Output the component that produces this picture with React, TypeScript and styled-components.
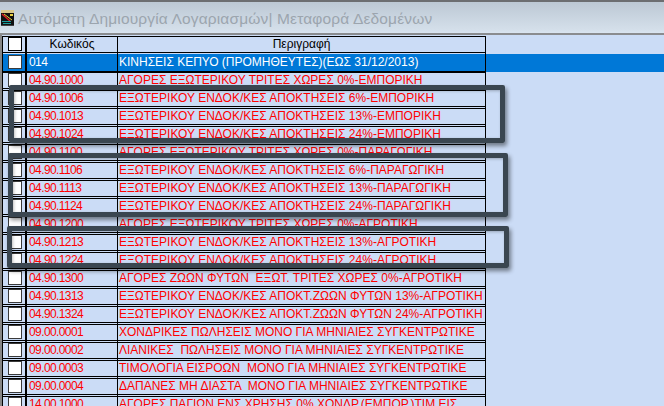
import React from 'react';
import styled, { createGlobalStyle } from 'styled-components';

const Global = createGlobalStyle`
  html, body { margin: 0; padding: 0; background: #cbdcf6; }
  body { font-family: "Liberation Sans", Arial, sans-serif; }
`;

const Screen = styled.div`
  position: relative;
  width: 664px;
  height: 406px;
  overflow: hidden;
  background: #cbdcf6;
  display: flex;
  flex-direction: column;
`;

const TitleBar = styled.div`
  flex-shrink: 0;
  height: 31px;
  border-top: 2px solid #6c6e71;
  background: linear-gradient(#bcc8d4, #d4dfea 90%, #dae5f1);
  display: flex;
  align-items: center;
  gap: 4px;
  padding-left: 1px;
`;

const Title = styled.span`
  font-size: 15.5px;
  letter-spacing: 0.15px;
  color: #9ca5ae;
  white-space: pre;
  padding-top: 3px;
`;

const Separator = styled.div`
  flex-shrink: 0;
  height: 2px;
  background: #8a8c8f;
`;

const Grid = styled.div`
  flex: 1;
  padding-top: 1px;
  border-left: 2px solid #868686;
  display: flex;
  flex-direction: column;
`;

const Row = styled.div<{ $selected?: boolean }>`
  display: grid;
  grid-template-columns: 25px 91px 368px 1fr;
  height: 18px;
  flex-shrink: 0;
  background: ${(p) => (p.$selected ? '#0078d7' : 'transparent')};
`;

const lines = `
  background-image: linear-gradient(#000, #000), linear-gradient(#000, #000);
  background-size: 100% 1px, 100% 1px;
  background-position: 0 0, 0 16px;
  background-repeat: no-repeat;
`;

const selLines = `
  background-image: linear-gradient(#000, #000);
  background-size: 100% 1px;
  background-position: 0 17px;
  background-repeat: no-repeat;
`;

const CheckCell = styled.div<{ $selected?: boolean }>`
  box-sizing: border-box;
  border-left: 1px solid #000;
  border-right: 2px solid #000;
  padding: 1px 0 0 5px;
  ${(p) => (p.$selected ? selLines : lines)}
`;

const Box = styled.div<{ $header?: boolean }>`
  box-sizing: border-box;
  width: 14px;
  height: 14px;
  background: #fff;
  border: 1px solid ${(p) => (p.$header ? '#000' : '#3a3a3a')};
`;

const TextCell = styled.div<{ $selected?: boolean; $header?: boolean; $code?: boolean; $pad: number }>`
  box-sizing: border-box;
  border-right: 1px solid #000;
  padding-left: ${(p) => p.$pad}px;
  overflow: hidden;
  white-space: pre;
  line-height: 17px;
  font-size: 12px;
  letter-spacing: ${(p) => (p.$code ? '-0.6px' : '0')};
  text-align: ${(p) => (p.$header ? 'center' : 'left')};
  font-family: ${(p) =>
    p.$header ? '"Liberation Sans", Arial, sans-serif' : '"Liberation Sans Narrow", "Liberation Sans", Arial, sans-serif'};
  color: ${(p) => (p.$header ? '#000' : p.$selected ? '#fff' : '#ff0000')};
  ${(p) => (p.$selected ? selLines : lines)}
`;

const Filler = styled.div``;

const Mark = styled.div<{ $l: number; $t: number; $w: number; $h: number }>`
  position: absolute;
  left: ${(p) => p.$l}px;
  top: ${(p) => p.$t}px;
  width: ${(p) => p.$w}px;
  height: ${(p) => p.$h}px;
  box-sizing: border-box;
  border: 5px solid #3a4650;
  border-radius: 2px;
  box-shadow: 2px 3px 4px rgba(0, 0, 0, 0.45), inset 1px 1px 3px rgba(0, 0, 0, 0.25);
  pointer-events: none;
`;

const AppIcon = () => (
  <svg width="13" height="16" viewBox="0 0 13 16">
    <rect x="0" y="0" width="13" height="16" fill="#111" />
    <rect x="0" y="0" width="13" height="3" fill="#d9c98c" />
    <path d="M1 4 L9 11" stroke="#e02020" strokeWidth="1.5" />
    <path d="M3 4 L11 10" stroke="#e8d040" strokeWidth="1" />
    <rect x="9" y="4" width="3" height="2" fill="#e8d040" />
    <rect x="1" y="11" width="9" height="1" fill="#1a9a9a" />
    <rect x="2" y="13" width="8" height="1" fill="#1a9a9a" />
    <rect x="0" y="15" width="13" height="1" fill="#444" />
  </svg>
);

const rows: [string, string][] = [
  ['014', 'ΚΙΝΗΣΕΙΣ ΚΕΠΥΟ (ΠΡΟΜΗΘΕΥΤΕΣ)(ΕΩΣ 31/12/2013)'],
  ['04.90.1000', 'ΑΓΟΡΕΣ ΕΞΩΤΕΡΙΚΟΥ ΤΡΙΤΕΣ ΧΩΡΕΣ 0%-ΕΜΠΟΡΙΚΗ'],
  ['04.90.1006', 'ΕΞΩΤΕΡΙΚΟΥ ΕΝΔΟΚ/ΚΕΣ ΑΠΟΚΤΗΣΕΙΣ 6%-ΕΜΠΟΡΙΚΗ'],
  ['04.90.1013', 'ΕΞΩΤΕΡΙΚΟΥ ΕΝΔΟΚ/ΚΕΣ ΑΠΟΚΤΗΣΕΙΣ 13%-ΕΜΠΟΡΙΚΗ'],
  ['04.90.1024', 'ΕΞΩΤΕΡΙΚΟΥ ΕΝΔΟΚ/ΚΕΣ ΑΠΟΚΤΗΣΕΙΣ 24%-ΕΜΠΟΡΙΚΗ'],
  ['04.90.1100', 'ΑΓΟΡΕΣ ΕΞΩΤΕΡΙΚΟΥ ΤΡΙΤΕΣ ΧΩΡΕΣ 0%-ΠΑΡΑΓΩΓΙΚΗ'],
  ['04.90.1106', 'ΕΞΩΤΕΡΙΚΟΥ ΕΝΔΟΚ/ΚΕΣ ΑΠΟΚΤΗΣΕΙΣ 6%-ΠΑΡΑΓΩΓΙΚΗ'],
  ['04.90.1113', 'ΕΞΩΤΕΡΙΚΟΥ ΕΝΔΟΚ/ΚΕΣ ΑΠΟΚΤΗΣΕΙΣ 13%-ΠΑΡΑΓΩΓΙΚΗ'],
  ['04.90.1124', 'ΕΞΩΤΕΡΙΚΟΥ ΕΝΔΟΚ/ΚΕΣ ΑΠΟΚΤΗΣΕΙΣ 24%-ΠΑΡΑΓΩΓΙΚΗ'],
  ['04.90.1200', 'ΑΓΟΡΕΣ ΕΞΩΤΕΡΙΚΟΥ ΤΡΙΤΕΣ ΧΩΡΕΣ 0%-ΑΓΡΟΤΙΚΗ'],
  ['04.90.1213', 'ΕΞΩΤΕΡΙΚΟΥ ΕΝΔΟΚ/ΚΕΣ ΑΠΟΚΤΗΣΕΙΣ 13%-ΑΓΡΟΤΙΚΗ'],
  ['04.90.1224', 'ΕΞΩΤΕΡΙΚΟΥ ΕΝΔΟΚ/ΚΕΣ ΑΠΟΚΤΗΣΕΙΣ 24%-ΑΓΡΟΤΙΚΗ'],
  ['04.90.1300', 'ΑΓΟΡΕΣ ΖΩΩΝ ΦΥΤΩΝ  ΕΞΩΤ. ΤΡΙΤΕΣ ΧΩΡΕΣ 0%-ΑΓΡΟΤΙΚΗ'],
  ['04.90.1313', 'ΕΞΩΤΕΡΙΚΟΥ ΕΝΔΟΚ/ΚΕΣ ΑΠΟΚΤ.ΖΩΩΝ ΦΥΤΩΝ 13%-ΑΓΡΟΤΙΚΗ'],
  ['04.90.1324', 'ΕΞΩΤΕΡΙΚΟΥ ΕΝΔΟΚ/ΚΕΣ ΑΠΟΚΤ.ΖΩΩΝ ΦΥΤΩΝ 24%-ΑΓΡΟΤΙΚΗ'],
  ['09.00.0001', 'ΧΟΝΔΡΙΚΕΣ ΠΩΛΗΣΕΙΣ ΜΟΝΟ ΓΙΑ ΜΗΝΙΑΙΕΣ ΣΥΓΚΕΝΤΡΩΤΙΚΕ'],
  ['09.00.0002', 'ΛΙΑΝΙΚΕΣ  ΠΩΛΗΣΕΙΣ ΜΟΝΟ ΓΙΑ ΜΗΝΙΑΙΕΣ ΣΥΓΚΕΝΤΡΩΤΙΚΕ'],
  ['09.00.0003', 'ΤΙΜΟΛΟΓΙΑ ΕΙΣΡΟΩΝ  ΜΟΝΟ ΓΙΑ ΜΗΝΙΑΙΕΣ ΣΥΓΚΕΝΤΡΩΤΙΚΕ'],
  ['09.00.0004', 'ΔΑΠΑΝΕΣ ΜΗ ΔΙΑΣΤΑ  ΜΟΝΟ ΓΙΑ ΜΗΝΙΑΙΕΣ ΣΥΓΚΕΝΤΡΩΤΙΚΕ'],
  ['14.00.1000', 'ΑΓΟΡΕΣ ΠΑΓΙΩΝ ΕΝΣ.ΧΡΗΣΗΣ 0% ΧΟΝΔΡ.(ΕΜΠΟΡ.)ΤΙΜ.ΕΙΣ'],
];

export default function App() {
  return (
    <>
      <Global />
      <Screen>
        <TitleBar>
          <AppIcon />
          <Title>Αυτόματη Δημιουργία Λογαριασμών| Μεταφορά Δεδομένων</Title>
        </TitleBar>
        <Separator />
        <Grid>
          <Row>
            <CheckCell>
              <Box $header />
            </CheckCell>
            <TextCell $header $pad={0}>Κωδικός</TextCell>
            <TextCell $header $pad={0}>Περιγραφή</TextCell>
            <Filler />
          </Row>
          {rows.map(([code, desc], i) => (
            <Row key={code} $selected={i === 0}>
              <CheckCell $selected={i === 0}>
                <Box />
              </CheckCell>
              <TextCell $selected={i === 0} $code $pad={2}>{code}</TextCell>
              <TextCell $selected={i === 0} $pad={1}>{desc}</TextCell>
              <Filler />
            </Row>
          ))}
        </Grid>
        <Mark $l={9} $t={85} $w={496} $h={58} />
        <Mark $l={8} $t={153} $w={500} $h={64} />
        <Mark $l={7} $t={226} $w={502} $h={42} />
      </Screen>
    </>
  );
}
